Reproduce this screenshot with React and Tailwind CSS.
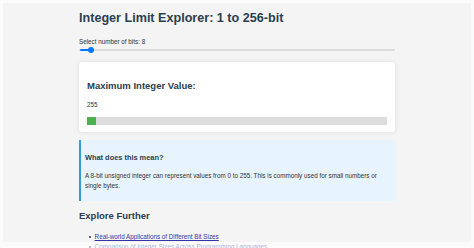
import React from 'react';

const App = () => {
  const bits = 8;
  const maxValue = (2n ** BigInt(bits) - 1n).toString();
  const fillPercent = (bits / 256) * 100;

  const links = [
    'Real-world Applications of Different Bit Sizes',
    'Comparison of Integer Sizes Across Programming Languages',
  ];

  return (
    <div className="relative h-[248px] overflow-hidden bg-[#f4f4f4] font-['Liberation_Sans',Arial,sans-serif] text-[#333]">
      <div className="mx-auto w-[316px]">
        {/* --- HEADER --- */}
        <h1 className="pt-[11px] text-[12.6px] font-bold leading-[14px] text-[#2c3e50]">
          Integer Limit Explorer: 1 to 256-bit
        </h1>

        {/* --- SLIDER --- */}
        <label className="mt-[12.5px] block text-[6.3px] leading-[7px]">
          Select number of bits: {bits}
        </label>
        <div className="relative mt-[2.7px] h-[6px]">
          <div className="absolute left-0 right-0 top-[2.2px] h-[1.6px] rounded-full bg-[#dcdcdc]" />
          <div className="absolute left-[1px] top-[1.8px] h-[2.4px] w-[10px] rounded-full bg-[#0075ff]" />
          <div className="absolute left-[9px] top-0 h-[6px] w-[6px] rounded-full bg-[#0075ff]" />
        </div>

        {/* --- RESULT CARD --- */}
        <div className="mt-[8.5px] rounded-[3px] bg-white px-[8px] pb-[7.3px] pt-[18px] shadow-[0_0_4px_rgba(0,0,0,0.1)]">
          <h2 className="text-[9.5px] font-bold leading-[11px] text-[#2c3e50]">Maximum Integer Value:</h2>
          <p className="mt-[10.5px] text-[6.3px] leading-[7px]">{maxValue}</p>
          <div className="mt-[9px] h-[7.5px] w-full bg-[#ddd]">
            <div className="h-full bg-[#4caf50]" style={{ width: `${fillPercent}%` }} />
          </div>
        </div>

        {/* --- INFO BOX --- */}
        <div className="mt-[7.7px] border-l-2 border-[#3498db] bg-[#e8f4fd] pb-[10.6px] pl-[4px] pr-[4px] pt-[14.3px]">
          <h3 className="text-[7.4px] font-bold leading-[8.3px] text-[#2c3e50]">What does this mean?</h3>
          <p className="mt-[8.5px] text-[6.3px] leading-[10px]">
            A 8-bit unsigned integer can represent values from 0 to 255. This is commonly used for small numbers or single bytes.
          </p>
        </div>

        {/* --- LINKS --- */}
        <h2 className="mt-[9px] text-[9.5px] font-bold leading-[11px] text-[#2c3e50]">Explore Further</h2>
        <ul className="mt-[10.8px] pl-[10px] text-[6.3px] leading-[10px]">
          {links.map((label) => (
            <li key={label} className="flex items-center gap-[4px]">
              <span className="h-[1.6px] w-[1.6px] shrink-0 rounded-full bg-[#333]" />
              <a href="#" className="text-[#3535a8] underline">{label}</a>
            </li>
          ))}
        </ul>
      </div>

      {/* faded frame round the shot */}
      <div className="pointer-events-none absolute inset-0 border-[3px] border-b-[6px] border-white/60" />
    </div>
  );
};

export default App;
